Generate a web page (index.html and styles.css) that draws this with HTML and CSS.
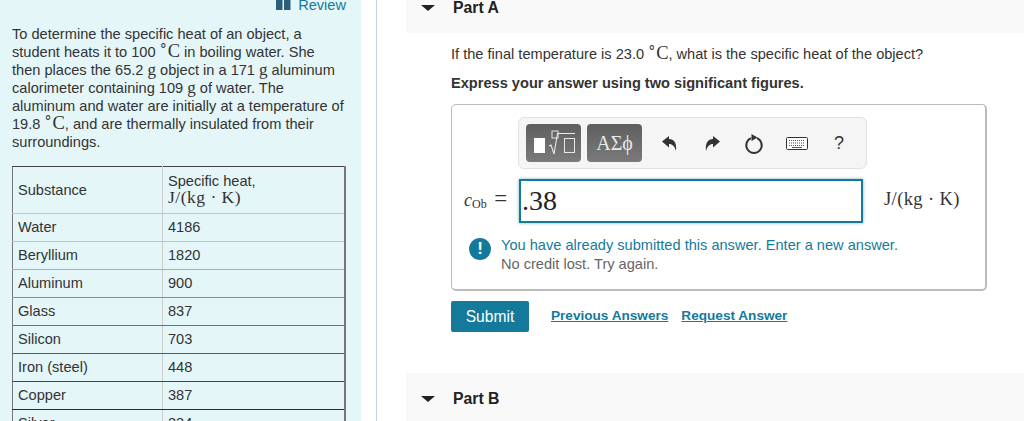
FILE: index.html
```html
<!DOCTYPE html>
<html lang="en">
<head>
    <meta charset="UTF-8">
    <title>Part A</title>
    <link rel="stylesheet" href="styles.css">
</head>
<body>
    <div class="page">
        <div class="side">
            <div class="review-row">
                <svg class="review-icon" width="15" height="10" viewBox="0 0 15 10"><rect x="0" y="0" width="6.5" height="10" fill="#2b5f78"/><rect x="8" y="0" width="6.5" height="10" fill="#2b5f78"/></svg>
                <a class="review">Review</a>
            </div>
            <p class="intro">To determine the specific heat of an object, a<br>student heats it to 100 <span class="deg">&deg;</span><span class="tex">C</span> in boiling water. She<br>then places the 65.2 <span class="tex-g">g</span> object in a 171 <span class="tex-g">g</span> aluminum<br>calorimeter containing 109 <span class="tex-g">g</span> of water. The<br>aluminum and water are initially at a temperature of<br>19.8 <span class="deg">&deg;</span><span class="tex">C</span>, and are thermally insulated from their<br>surroundings.</p>
            <table class="heat">
                <tr class="head"><td>Substance</td><td><div class="th-line">Specific heat,</div><div class="th-unit">J/(kg &middot; K)</div></td></tr>
                <tr class="r1"><td>Water</td><td>4186</td></tr>
                <tr class="r2"><td>Beryllium</td><td>1820</td></tr>
                <tr class="r3"><td>Aluminum</td><td>900</td></tr>
                <tr class="r4"><td>Glass</td><td>837</td></tr>
                <tr class="r5"><td>Silicon</td><td>703</td></tr>
                <tr class="r6"><td>Iron (steel)</td><td>448</td></tr>
                <tr class="r7"><td>Copper</td><td>387</td></tr>
                <tr class="r8"><td>Silver</td><td>234</td></tr>
            </table>
        </div>
        <div class="divider"></div>
        <div class="main">
            <div class="part-head part-a">
                <span class="caret"></span>
                <h2>Part A</h2>
            </div>
            <div class="part-body">
                <p class="question">If the final temperature is 23.0 <span class="deg">&deg;</span><span class="tex">C</span>, what is the specific heat of the object?</p>
                <p class="express">Express your answer using two significant figures.</p>
                <div class="answer-box">
                    <div class="toolbar">
                        <div class="tool-btn">
                            <svg width="55" height="38" viewBox="0 0 55 38">
                                <rect x="8" y="14" width="11" height="15" fill="#fff"/>
                                <rect x="26" y="7" width="6" height="7" fill="none" stroke="#e8e8e8" stroke-width="1"/>
                                <path d="M23 22 L25 21 L28 30 L31.5 9.5 L49 9.5" fill="none" stroke="#e8e8e8" stroke-width="1.1"/>
                                <rect x="38.5" y="14.5" width="10" height="14" fill="none" stroke="#e8e8e8" stroke-width="1"/>
                            </svg>
                        </div>
                        <div class="tool-btn greek">&Alpha;&Sigma;&straightphi;</div>
                        <div class="tool-icons">
                            <svg class="ti-undo" width="17" height="17" viewBox="0 0 17 17"><path d="M1 6.5 L8 1 L8 4 C13 4 16 8 15 16 C13.5 11 11.5 9 8 9 L8 12.5 Z" fill="#333"/></svg>
                            <svg class="ti-redo" width="17" height="17" viewBox="0 0 17 17"><path d="M16 6.5 L9 1 L9 4 C4 4 1 8 2 16 C3.5 11 5.5 9 9 9 L9 12.5 Z" fill="#333"/></svg>
                            <svg class="ti-reload" width="20" height="21" viewBox="0 0 20 21"><path d="M7 5.2 A7.7 7.7 0 1 0 13 5.2" fill="none" stroke="#333" stroke-width="2"/><path d="M7.5 1 L13.5 4.5 L7.5 8 Z" fill="#333"/></svg>
                            <svg class="ti-keys" width="22" height="13" viewBox="0 0 22 13"><rect x="0.5" y="0.5" width="21" height="12" rx="1" fill="#fff" stroke="#333"/><path d="M3 3.5H19M3 6H19M3 8.5H19" stroke="#555" stroke-width="1.2" stroke-dasharray="1 1"/><path d="M6 10.5H16" stroke="#555"/></svg>
                            <span class="help">?</span>
                        </div>
                    </div>
                    <div class="answer-row">
                        <div class="var"><i>c</i><sub>Ob</sub> <span class="eq">=</span></div>
                        <div class="answer-input">.38</div>
                        <div class="unit">J/(kg &middot; K)</div>
                    </div>
                    <div class="alert">
                        <span class="alert-icon">!</span>
                        <div>
                            <div class="alert-main">You have already submitted this answer. Enter a new answer.</div>
                            <div class="alert-sub">No credit lost. Try again.</div>
                        </div>
                    </div>
                </div>
                <div class="actions">
                    <button class="submit">Submit</button>
                    <a class="link">Previous Answers</a>
                    <a class="link">Request Answer</a>
                </div>
            </div>
            <div class="part-head part-b">
                <span class="caret"></span>
                <h2>Part B</h2>
            </div>
        </div>
    </div>
</body>
</html>
```

FILE: styles.css
```css
html, body {
    margin: 0;
    height: 421px;
    overflow: hidden;
    background-color: #ffffff;
}
body {
    color: #333333;
    font-family: "Liberation Sans", Arial, sans-serif;
    font-size: 14.6px;
}
.page {
    display: flex;
    height: 421px;
    overflow: hidden;
}

/* left column */
.side {
    width: 361px;
    flex: none;
    background-color: #e5f6f8;
    padding: 0 15px 0 12px;
    box-sizing: border-box;
}
.review-row {
    display: flex;
    justify-content: flex-end;
    align-items: center;
    gap: 7px;
    height: 10px;
    line-height: 10px;
}
.review-icon {
    margin-top: -1px;
}
.review {
    color: #147a9c;
}
.intro {
    margin: 15px 0 15px;
    line-height: 18px;
    white-space: nowrap;
}
.deg {
    font-family: "DejaVu Sans", sans-serif;
    font-size: 14px;
    vertical-align: 3px;
    line-height: 0;
    margin-right: 1px;
}
.tex {
    font-family: "Liberation Serif", serif;
    font-size: 18.5px;
    line-height: 0;
}
.tex-g {
    font-family: "Liberation Serif", serif;
    font-size: 17px;
    line-height: 0;
}
.heat {
    width: 334px;
    border-collapse: collapse;
    table-layout: fixed;
    border-top: 1px solid #444;
    border-right: 2px solid #777;
    border-left: 1px solid #777;
}
.heat td {
    height: 26px;
    padding: 0 5px 1px;
    border-bottom: 1px solid #333;
    line-height: 16px;
}
.heat td:first-child {
    width: 139px;
    border-right: 1px solid #ccc;
}
.heat .head td {
    height: 45px;
    border-bottom-color: #c4c4c4;
}
.th-line {
    margin-top: -1px;
    line-height: 14px;
}
.th-unit {
    margin-top: 2px;
    font-family: "Liberation Serif", serif;
    font-size: 17.5px;
    letter-spacing: 0.5px;
    line-height: 15px;
}
.heat .r1 td { border-bottom-color: #c0c0c0; }
.heat .r2 td { border-bottom-color: #adadad; }
.heat .r3 td { border-bottom-color: #8c8c8c; }
.heat .r4 td { border-bottom-color: #707070; }
.heat .r5 td { border-bottom-color: #5a5a5a; }
.heat .r6 td { border-bottom-color: #444444; }
.heat .r7 td { border-bottom-color: #2e2e2e; }

.divider {
    width: 1px;
    flex: none;
    margin-left: 15px;
    background-color: #c3d3e2;
}

/* right column */
.main {
    flex: 1;
    margin-left: 29px;
    min-width: 0;
}
.part-head {
    display: flex;
    align-items: center;
    background-color: #f9f9f9;
    padding-left: 15px;
}
.part-head h2 {
    margin: 0 0 0 18px;
    font-size: 15.8px;
    color: #222;
}
.part-a {
    height: 33px;
    padding-bottom: 17px;
    box-sizing: border-box;
}
.part-b {
    height: 48px;
    margin-top: 41px;
    padding-top: 4px;
    box-sizing: border-box;
}
.caret {
    width: 0;
    height: 0;
    border-left: 7px solid transparent;
    border-right: 7px solid transparent;
    border-top: 6px solid #222;
}
.part-body {
    padding-left: 45px;
    padding-right: 37px;
}
.question {
    margin: 12px 0 0;
    line-height: 18px;
}
.express {
    margin: 11px 0 0;
    line-height: 18px;
    font-weight: bold;
}
.answer-box {
    margin-top: 12px;
    height: 187px;
    box-sizing: border-box;
    border: 1px solid #bbbbbb;
    border-right-width: 2px;
    border-bottom-width: 2px;
    border-radius: 5px;
    padding-top: 12px;
}
.toolbar {
    display: flex;
    align-items: center;
    gap: 6px;
    width: 349px;
    height: 52px;
    box-sizing: border-box;
    margin-left: 66px;
    padding-left: 7px;
    background-color: #f5f5f5;
    border: 1px solid #e2e2e2;
    border-radius: 6px;
}
.tool-btn {
    width: 55px;
    height: 38px;
    display: flex;
    align-items: center;
    justify-content: center;
    background: linear-gradient(#5f5f5f, #7a7a7a);
    border-radius: 4px;
    color: #e8e8e8;
}
.greek {
    font-family: "Liberation Serif", "DejaVu Serif", serif;
    font-size: 20px;
}
.tool-icons {
    display: flex;
    align-items: center;
    margin-left: 13px;
}
.ti-redo { margin-left: 26px; }
.ti-reload { margin-left: 23px; }
.ti-keys { margin-left: 22px; }
.help {
    margin-left: 26px;
    font-size: 18px;
    color: #333;
}
.answer-row {
    display: flex;
    align-items: center;
    margin-top: 10px;
}
.var {
    width: 67px;
    box-sizing: border-box;
    padding-left: 12px;
    font-family: "Liberation Serif", serif;
    font-size: 18px;
    white-space: nowrap;
}
.var sub {
    font-size: 12px;
    vertical-align: -2px;
}
.eq {
    font-size: 23px;
    line-height: 0;
    margin-left: 3px;
}
.answer-input {
    width: 344px;
    height: 44px;
    box-sizing: border-box;
    border: 2px solid #147a9c;
    box-shadow: 0 0 3px rgba(20, 122, 156, 0.6);
    padding-left: 1px;
    font-family: "Liberation Serif", serif;
    font-size: 28px;
    line-height: 40px;
    color: #222;
}
.unit {
    margin: -3px 0 0 21px;
    font-family: "Liberation Serif", serif;
    font-size: 18.5px;
    letter-spacing: 0.4px;
    white-space: nowrap;
}
.alert {
    display: flex;
    gap: 10px;
    margin-top: 13px;
    padding-left: 17px;
    line-height: 18px;
}
.alert-icon {
    flex: none;
    width: 22px;
    height: 22px;
    margin-top: 2px;
    border-radius: 50%;
    background-color: #147a9c;
    color: #fff;
    font-weight: bold;
    font-size: 17px;
    line-height: 22px;
    text-align: center;
}
.alert-main {
    color: #147a9c;
}
.alert-sub {
    margin-top: 1px;
    color: #666;
}
.actions {
    display: flex;
    align-items: center;
    margin-top: 10px;
    gap: 13px;
}
.submit {
    width: 78px;
    height: 31px;
    margin-right: 9px;
    border: 0;
    border-radius: 2px;
    background-color: #147a9c;
    color: #fff;
    font-family: "Liberation Sans", Arial, sans-serif;
    font-size: 15.6px;
}
.link {
    margin-top: -3px;
    color: #147a9c;
    font-size: 13.6px;
    font-weight: bold;
    text-decoration: underline;
}
```
